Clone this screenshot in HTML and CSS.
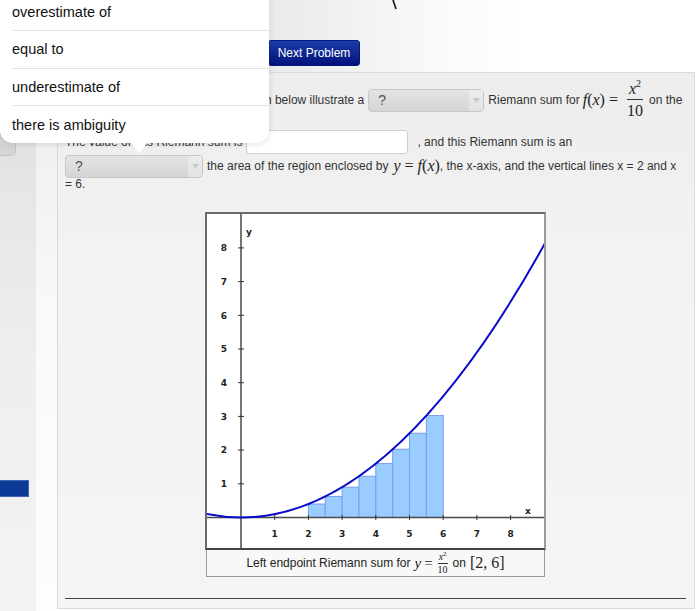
FILE: index.html
```html
<!DOCTYPE html>
<html>
<head>
<meta charset="utf-8">
<link rel="stylesheet" href="styles.css">
</head>
<body>
<div class="top">
  <button class="btn">Next Problem</button>
</div>
<div class="main">
  <aside class="leftcol">
    <div class="tab"></div>
    <div class="bluebar"></div>
  </aside>
  <div class="strip"></div>
  <section class="panel">
    <div class="line l1">
      <span class="lead">(1 pt.) The blue rectangles in the graph below illustrate a</span>
      <span class="sel sel-a"><span class="q">?</span><span class="arr"><svg width="7" height="5" viewBox="0 0 7 5"><path d="M0 0H7L3.5 5Z" fill="#c9c9c9"/></svg></span></span>
      <span class="txt">Riemann sum for</span>
      <span class="m fx"><i>f</i>(<i>x</i>)<span class="eq">=</span></span>
      <span class="frac"><span class="num"><i>x</i><sup>2</sup></span><span class="den">10</span></span>
      <span class="txt">on the</span>
    </div>
    <div class="line l2"></div>
    <div class="line l3">
      <span class="txt">The value of this Riemann sum is</span>
      <span class="inp"></span>
      <span class="txt after">, and this Riemann sum is an</span>
    </div>
    <div class="line l4">
      <span class="sel sel-b"><span class="q">?</span><span class="arr"><svg width="7" height="5" viewBox="0 0 7 5"><path d="M0 0H7L3.5 5Z" fill="#c9c9c9"/></svg></span></span>
      <span class="txt">the area of the region enclosed by</span>
      <span class="m ym"><i>y</i><span class="eq">=</span><i>f</i>(<i>x</i>)</span><span class="txt">, the x-axis, and the vertical lines x = 2 and x</span>
    </div>
    <div class="line l5">= 6.</div>
    <figure class="fig">
      <div class="plot">
        <svg width="337" height="334" viewBox="0 0 337 334">
          <g fill="#99ccff" stroke="#7a9cf2" stroke-width="1">
            <rect x="101.4" y="290.02" width="16.85" height="13.48"/>
            <rect x="118.25" y="282.44" width="16.85" height="21.06"/>
            <rect x="135.1" y="273.17" width="16.85" height="30.33"/>
            <rect x="151.95" y="262.22" width="16.85" height="41.28"/>
            <rect x="168.8" y="249.58" width="16.85" height="53.92"/>
            <rect x="185.65" y="235.26" width="16.85" height="68.24"/>
            <rect x="202.5" y="219.25" width="16.85" height="84.25"/>
            <rect x="219.35" y="201.56" width="16.85" height="101.94"/>
          </g>
          <g stroke="#4a4a4a" stroke-width="1.5">
            <line x1="34" y1="0" x2="34" y2="334"/>
            <line x1="0" y1="303.5" x2="337" y2="303.5"/>
          </g>
          <g stroke="#333" stroke-width="1">
            <line x1="31" y1="269.8" x2="37" y2="269.8"/>
            <line x1="31" y1="236.1" x2="37" y2="236.1"/>
            <line x1="31" y1="202.4" x2="37" y2="202.4"/>
            <line x1="31" y1="168.7" x2="37" y2="168.7"/>
            <line x1="31" y1="135" x2="37" y2="135"/>
            <line x1="31" y1="101.3" x2="37" y2="101.3"/>
            <line x1="31" y1="67.6" x2="37" y2="67.6"/>
            <line x1="31" y1="33.9" x2="37" y2="33.9"/>
            <line x1="67.7" y1="301" x2="67.7" y2="306"/>
            <line x1="101.4" y1="301" x2="101.4" y2="306"/>
            <line x1="135.1" y1="301" x2="135.1" y2="306"/>
            <line x1="168.8" y1="301" x2="168.8" y2="306"/>
            <line x1="202.5" y1="301" x2="202.5" y2="306"/>
            <line x1="236.2" y1="301" x2="236.2" y2="306"/>
            <line x1="269.9" y1="301" x2="269.9" y2="306"/>
            <line x1="303.6" y1="301" x2="303.6" y2="306"/>
          </g>
          <g class="lbl" text-anchor="middle">
            <text x="17" y="273">1</text>
            <text x="17" y="239.3">2</text>
            <text x="17" y="205.6">3</text>
            <text x="17" y="171.9">4</text>
            <text x="17" y="138.2">5</text>
            <text x="17" y="104.5">6</text>
            <text x="17" y="70.8">7</text>
            <text x="17" y="37.1">8</text>
            <text x="67.7" y="323">1</text>
            <text x="101.4" y="323">2</text>
            <text x="135.1" y="323">3</text>
            <text x="168.8" y="323">4</text>
            <text x="202.5" y="323">5</text>
            <text x="236.2" y="323">6</text>
            <text x="269.9" y="323">7</text>
            <text x="303.6" y="323">8</text>
            <text x="42" y="21">y</text>
            <text x="321" y="300">x</text>
          </g>
          <path d="M-3.07 299.42 Q168.8 337.23 340.67 24.43" fill="none" stroke="#0a0acc" stroke-width="2"/>
        </svg>
      </div>
      <figcaption class="cap">
        <span class="txt">Left endpoint Riemann sum for</span>
        <span class="m cm"><i>y</i><span class="eq">=</span></span>
        <span class="frac small"><span class="num"><i>x</i><sup>2</sup></span><span class="den">10</span></span>
        <span class="txt">on</span>
        <span class="m iv">[2, 6]</span>
      </figcaption>
    </figure>
    <hr class="rule">
  </section>
</div>
<div class="popup">
  <div class="opt">overestimate of</div>
  <div class="opt">equal to</div>
  <div class="opt">underestimate of</div>
  <div class="opt">there is ambiguity</div>
</div>
<svg class="cursor" width="8" height="12" viewBox="0 0 8 12"><path d="M2 0 L5 9" stroke="#111" stroke-width="1.6" fill="none"/></svg>
</body>
</html>
```

FILE: styles.css
```css
* { box-sizing: border-box; }
html, body { margin: 0; padding: 0; }
body {
  width: 700px;
  height: 611px;
  overflow: hidden;
  position: relative;
  font-family: "Liberation Sans", Arial, sans-serif;
  font-size: 12px;
  color: #333;
  background: #fff;
}

.top {
  height: 72px;
  padding: 40px 0 0 268px;
  background: linear-gradient(90deg, #e5e5e5 0, #ebebeb 280px, #f9f9f9 430px, #fff 520px);
}
.btn {
  display: block;
  width: 92px;
  height: 26px;
  padding: 0;
  border: 1px solid #07177c;
  border-radius: 3px;
  background: linear-gradient(#1b3ea9, #02117c);
  color: #fff;
  font: 12px "Liberation Sans", Arial, sans-serif;
}

.main { display: flex; height: 539px; }
.leftcol {
  width: 36px;
  padding-top: 58px;
  display: flex;
  flex-direction: column;
  background: linear-gradient(#dadada 0, #e6e6e6 120px, #eeeeee 280px, #f3f3f3 100%);
}
.tab {
  width: 16px;
  height: 26px;
  background: #d5d5d5;
  border: 1px solid #c3c3c3;
  border-left: none;
  border-radius: 0 0 5px 0;
}
.bluebar {
  width: 29px;
  height: 17px;
  margin-top: 324px;
  background: #0b3b96;
  border: 1px solid #3f66b3;
  border-left: none;
}
.strip {
  width: 21px;
  background: linear-gradient(#ececec, #f9f9f9 240px, #fdfdfd);
}
.panel {
  width: 638px;
  height: 537px;
  border: 1px solid #dadada;
  padding: 8px 8px 0 7px;
  background: linear-gradient(#ededed, #f3f3f3 220px, #f4f4f4);
}

.line { display: flex; align-items: center; white-space: nowrap; }
.l1 { height: 38px; }
.l2 { height: 11px; }
.l3 { height: 24px; }
.l4 { height: 24px; }
.l5 { height: 13px; line-height: 13px; }

.sel {
  display: flex;
  align-items: stretch;
  height: 23px;
  margin: 0 4px;
  border: 1px solid #c7c7c7;
  border-radius: 4px;
  background: linear-gradient(#e4e4e4, #d5d5d5);
  color: #555;
  font-size: 14px;
}
.sel-a { width: 116px; }
.sel-b { width: 138px; margin-left: 0; }
.sel .q { flex: 1; display: flex; align-items: center; padding-left: 9px; }
.sel .arr {
  width: 14px;
  display: flex;
  align-items: center;
  justify-content: center;
  background: linear-gradient(#ececec, #e2e2e2);
  border-radius: 0 3px 3px 0;
}

.inp {
  width: 162px;
  height: 24px;
  margin-left: 4px;
  background: #fff;
  border: 1px solid #cfcfcf;
  border-radius: 3px;
}
.after { margin-left: 9px; }

.m { font-family: "Liberation Serif", "Times New Roman", serif; font-size: 16px; color: #222; display: inline-flex; align-items: baseline; }
.eq { margin: 0 4px; }
.fx { margin-left: 3px; }
.ym { margin-left: 5px; }
.frac {
  display: inline-flex;
  flex-direction: column;
  align-items: center;
  font-family: "Liberation Serif", "Times New Roman", serif;
  font-size: 16px;
  line-height: 1;
  color: #222;
  margin: 0 6px 0 5px;
}
.frac .num { padding: 0 2px 2px; border-bottom: 1px solid #333; }
.frac .den { padding-top: 3px; }
.frac sup { font-size: 10px; vertical-align: 7px; line-height: 0; }

.fig { margin: 21px 0 0 140px; width: 341px; }
.plot {
  width: 341px;
  height: 338px;
  border: 2px solid #6a6a6a;
  border-right-color: #9a9a9a;
  border-bottom-color: #444;
  background: #fff;
}
.plot svg { display: block; }
.lbl { font-family: "DejaVu Sans", sans-serif; font-weight: bold; font-size: 9px; fill: #222; }
.cap {
  width: 339px;
  height: 27px;
  margin-left: 1px;
  border: 1px solid #9a9a9a;
  border-top: none;
  background: #f8f8f8;
  display: flex;
  align-items: center;
  justify-content: center;
  white-space: nowrap;
  color: #222;
}
.cm { margin-left: 4px; font-size: 15px; }
.cm .eq { margin: 0 3px; }
.frac.small { font-size: 10px; margin: 0 5px 0 2px; }
.frac.small sup { font-size: 7px; vertical-align: 4px; }
.frac.small .num { padding: 0 1px 1px; }
.frac.small .den { padding-top: 1px; }
.iv { font-size: 16px; margin-left: 4px; font-style: normal; }

.rule { margin: 21px 0 0 0; border: 0; border-top: 1px solid #444; width: 621px; height: 0; }

.popup {
  position: absolute;
  left: 0;
  top: -6px;
  width: 269px;
  background: #fff;
  border-radius: 0 0 13px 13px;
  box-shadow: 0 1px 6px rgba(0, 0, 0, 0.12);
}
.popup::after {
  content: "";
  position: absolute;
  left: 131px;
  top: 100%;
  border-left: 8px solid transparent;
  border-right: 8px solid transparent;
  border-top: 10px solid #fff;
}
.opt {
  height: 37.3px;
  margin-left: 12px;
  display: flex;
  align-items: center;
  font-size: 14.5px;
  color: #111;
  border-bottom: 1px solid #e2e2e2;
}
.opt:last-child { border-bottom: none; }

.cursor { position: absolute; left: 391px; top: 0; }
```
